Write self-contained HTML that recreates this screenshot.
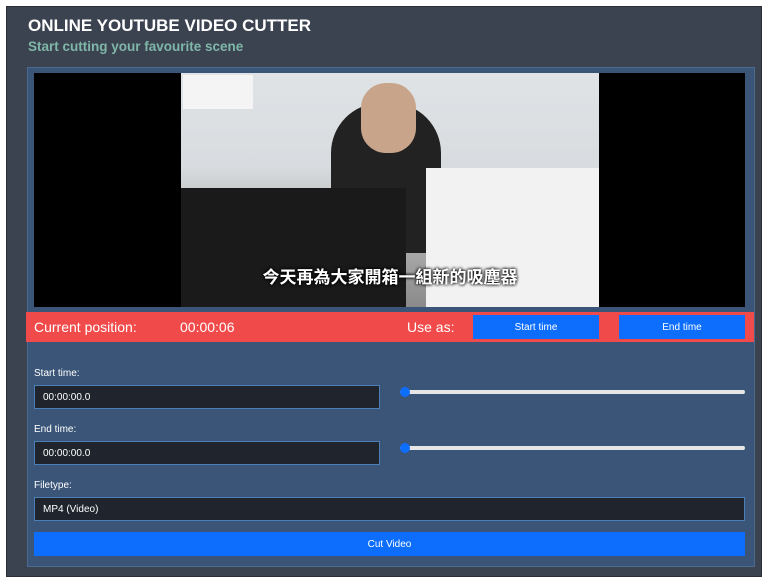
<!DOCTYPE html>
<html><head><meta charset="utf-8"><style>
*{margin:0;padding:0;box-sizing:border-box}
body{width:768px;height:582px;background:#fff;font-family:"Liberation Sans","Noto Sans CJK TC",sans-serif;position:relative;overflow:hidden}
.outer{position:absolute;left:6px;top:6px;width:756px;height:571px;background:#3c4350;border:1px solid #2a2f38}
.abs{position:absolute}
h1{position:absolute;left:21px;top:9px;color:#fff;font-size:17px;font-weight:bold}
.sub{position:absolute;left:21px;top:32px;color:#7fb7a8;font-size:13.5px;font-weight:bold}
.panel{position:absolute;left:20px;top:60px;width:728px;height:500px;background:#3a5577;border:1px solid #4a6a90}
.label{color:#fff;font-size:10px}
.inp{background:#20252d;border:1px solid #4b7fb8;color:#fff;font-size:10px;padding-left:8px;line-height:24px}
.btn{background:#0d6efd;color:#fff;font-size:10px;text-align:center;line-height:25px}
.track{height:4px;background:#e6e6e6;border-radius:2px}
.dot{width:10px;height:10px;border-radius:50%;background:#0d6efd}
</style></head><body>
<div class="outer">
<h1>ONLINE YOUTUBE VIDEO CUTTER</h1>
<div class="sub">Start cutting your favourite scene</div>
<div class="panel"></div>
</div>
<div class="abs" style="left:34px;top:73px;width:711px;height:234px;background:#000"></div>
<div class="abs" style="left:181px;top:73px;width:418px;height:234px;background:linear-gradient(#dfe3e6 0%,#d8dcdf 40%,#bdbdbd 60%,#8a8a8a 100%);overflow:hidden">
 <div class="abs" style="left:150px;top:30px;width:110px;height:150px;background:#222;border-radius:50px 50px 10px 10px"></div>
 <div class="abs" style="left:180px;top:10px;width:55px;height:70px;background:#c8a58a;border-radius:25px"></div>
 <div class="abs" style="left:0;top:115px;width:225px;height:119px;background:#1a1a1a"></div>
 <div class="abs" style="left:245px;top:95px;width:173px;height:139px;background:#f2f2f2"></div>
 <div class="abs" style="left:2px;top:2px;width:70px;height:34px;background:#f4f4f4"></div>
 <div class="abs" style="left:0;top:190px;width:418px;text-align:center;color:#fff;font-size:17px;font-weight:bold;text-shadow:0 0 3px #000,0 0 3px #000">今天再為大家開箱一組新的吸塵器</div>
</div>
<div class="abs" style="left:26px;top:312px;width:728px;height:30px;background:#f14a4a"></div>
<div class="abs" style="left:34px;top:319px;color:#fff;font-size:14px">Current position:</div>
<div class="abs" style="left:180px;top:319px;color:#fff;font-size:14px">00:00:06</div>
<div class="abs" style="left:407px;top:319px;color:#fff;font-size:14px">Use as:</div>
<div class="abs btn" style="left:473px;top:315px;width:126px;height:24px">Start time</div>
<div class="abs btn" style="left:619px;top:315px;width:126px;height:24px">End time</div>
<div class="abs label" style="left:34px;top:368px">Start time:</div>
<div class="abs inp" style="left:34px;top:385px;width:346px;height:24px">00:00:00.0</div>
<div class="abs track" style="left:400px;top:390px;width:345px"></div>
<div class="abs dot" style="left:400px;top:387px"></div>
<div class="abs label" style="left:34px;top:424px">End time:</div>
<div class="abs inp" style="left:34px;top:441px;width:346px;height:24px">00:00:00.0</div>
<div class="abs track" style="left:400px;top:446px;width:345px"></div>
<div class="abs dot" style="left:400px;top:443px"></div>
<div class="abs label" style="left:34px;top:480px">Filetype:</div>
<div class="abs inp" style="left:34px;top:497px;width:711px;height:24px">MP4 (Video)</div>
<div class="abs btn" style="left:34px;top:532px;width:711px;height:24px">Cut Video</div>
</body></html>
